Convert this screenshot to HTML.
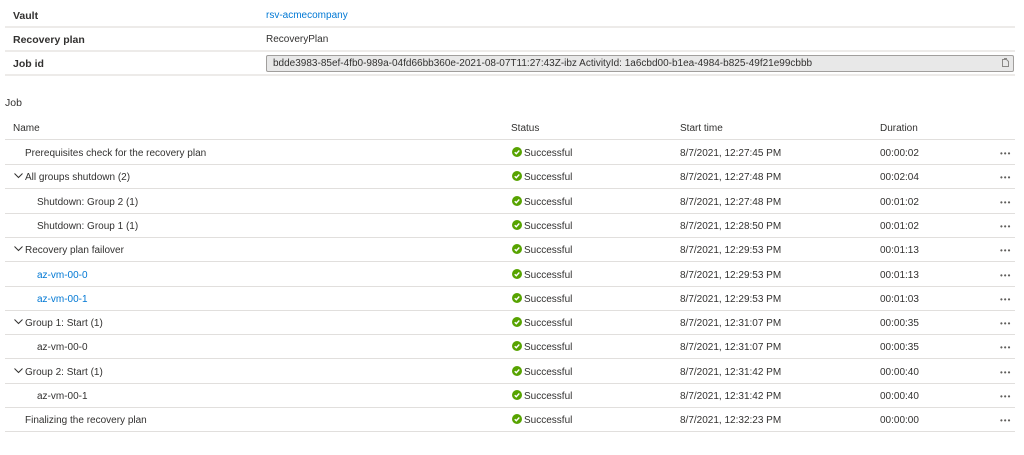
<!DOCTYPE html>
<html><head><meta charset="utf-8"><style>
body{margin:0;width:1024px;height:455px;background:#fff;font-family:"Liberation Sans",sans-serif;font-size:10px;color:#323130;position:relative;overflow:hidden}
.a{position:absolute;white-space:nowrap}
.ln{position:absolute;left:5px;right:9px;height:1px;background:#e1dfdd}
.b{font-weight:bold;font-size:10.5px}
.l{color:#0078d4}
.r{position:absolute;left:5px;right:9px;height:24px;border-bottom:1px solid #e1dfdd}
.r span{position:absolute;top:8px;white-space:nowrap}
.ck{position:absolute;left:507px;top:7px;width:10px;height:10px}
.dots{position:absolute;left:995px;top:9px!important;font-size:8px;letter-spacing:1px;color:#605e5c}
.chev{position:absolute;left:9px;top:9px}
</style></head><body>
<div class="a b" style="left:13px;top:10px">Vault</div>
<div class="a l" style="left:266px;top:10px">rsv-acmecompany</div>
<div class="ln" style="top:26px;height:2px;background:#edebe9"></div>
<div class="a b" style="left:13px;top:34px">Recovery plan</div>
<div class="a" style="left:266px;top:34px">RecoveryPlan</div>
<div class="ln" style="top:50px;height:2px;background:#edebe9"></div>
<div class="a b" style="left:13px;top:58px">Job id</div>
<div class="a" style="left:266px;top:55px;width:746px;height:15px;background:#e8e8e8;border:1px solid #a19f9d;border-radius:2px"></div>
<div class="a" style="left:273px;top:58px;color:#323130">bdde3983-85ef-4fb0-989a-04fd66bb360e-2021-08-07T11:27:43Z-ibz ActivityId: 1a6cbd00-b1ea-4984-b825-49f21e99cbbb</div>
<svg class="a" style="left:1001px;top:58px" width="9" height="10" viewBox="0 0 9 10"><path d="M1.5 1.5h4l2 2v5h-6z" fill="none" stroke="#8a8886"/><path d="M3 .5h3" stroke="#8a8886"/></svg>
<div class="ln" style="top:74px;height:2px;background:#edebe9"></div>
<div class="a" style="left:5px;top:97px;font-size:10.5px">Job</div>
<div class="r" style="top:115px"><span style="left:8px">Name</span><span style="left:506px">Status</span><span style="left:675px">Start time</span><span style="left:875px">Duration</span></div>

<div class="r" style="top:140px"><span style="left:20px">Prerequisites check for the recovery plan</span><svg class="ck" viewBox="0 0 10 10"><circle cx="5" cy="5" r="5" fill="#57a300"/><path d="M2.7 5.2l1.6 1.5 3-3.2" fill="none" stroke="#fff" stroke-width="1.4"/></svg><span style="left:519px">Successful</span><span style="left:675px">8/7/2021, 12:27:45 PM</span><span style="left:875px">00:00:02</span><span class="dots">•••</span></div>
<div class="r" style="top:164.3px"><svg class="chev" width="9" height="6"><path d="M.5 .5l4 4 4-4" fill="none" stroke="#323130"/></svg><span style="left:20px">All groups shutdown (2)</span><svg class="ck" viewBox="0 0 10 10"><circle cx="5" cy="5" r="5" fill="#57a300"/><path d="M2.7 5.2l1.6 1.5 3-3.2" fill="none" stroke="#fff" stroke-width="1.4"/></svg><span style="left:519px">Successful</span><span style="left:675px">8/7/2021, 12:27:48 PM</span><span style="left:875px">00:02:04</span><span class="dots">•••</span></div>
<div class="r" style="top:188.6px"><span style="left:32px">Shutdown: Group 2 (1)</span><svg class="ck" viewBox="0 0 10 10"><circle cx="5" cy="5" r="5" fill="#57a300"/><path d="M2.7 5.2l1.6 1.5 3-3.2" fill="none" stroke="#fff" stroke-width="1.4"/></svg><span style="left:519px">Successful</span><span style="left:675px">8/7/2021, 12:27:48 PM</span><span style="left:875px">00:01:02</span><span class="dots">•••</span></div>
<div class="r" style="top:212.9px"><span style="left:32px">Shutdown: Group 1 (1)</span><svg class="ck" viewBox="0 0 10 10"><circle cx="5" cy="5" r="5" fill="#57a300"/><path d="M2.7 5.2l1.6 1.5 3-3.2" fill="none" stroke="#fff" stroke-width="1.4"/></svg><span style="left:519px">Successful</span><span style="left:675px">8/7/2021, 12:28:50 PM</span><span style="left:875px">00:01:02</span><span class="dots">•••</span></div>
<div class="r" style="top:237.2px"><svg class="chev" width="9" height="6"><path d="M.5 .5l4 4 4-4" fill="none" stroke="#323130"/></svg><span style="left:20px">Recovery plan failover</span><svg class="ck" viewBox="0 0 10 10"><circle cx="5" cy="5" r="5" fill="#57a300"/><path d="M2.7 5.2l1.6 1.5 3-3.2" fill="none" stroke="#fff" stroke-width="1.4"/></svg><span style="left:519px">Successful</span><span style="left:675px">8/7/2021, 12:29:53 PM</span><span style="left:875px">00:01:13</span><span class="dots">•••</span></div>
<div class="r" style="top:261.5px"><span class="l" style="left:32px">az-vm-00-0</span><svg class="ck" viewBox="0 0 10 10"><circle cx="5" cy="5" r="5" fill="#57a300"/><path d="M2.7 5.2l1.6 1.5 3-3.2" fill="none" stroke="#fff" stroke-width="1.4"/></svg><span style="left:519px">Successful</span><span style="left:675px">8/7/2021, 12:29:53 PM</span><span style="left:875px">00:01:13</span><span class="dots">•••</span></div>
<div class="r" style="top:285.8px"><span class="l" style="left:32px">az-vm-00-1</span><svg class="ck" viewBox="0 0 10 10"><circle cx="5" cy="5" r="5" fill="#57a300"/><path d="M2.7 5.2l1.6 1.5 3-3.2" fill="none" stroke="#fff" stroke-width="1.4"/></svg><span style="left:519px">Successful</span><span style="left:675px">8/7/2021, 12:29:53 PM</span><span style="left:875px">00:01:03</span><span class="dots">•••</span></div>
<div class="r" style="top:310.1px"><svg class="chev" width="9" height="6"><path d="M.5 .5l4 4 4-4" fill="none" stroke="#323130"/></svg><span style="left:20px">Group 1: Start (1)</span><svg class="ck" viewBox="0 0 10 10"><circle cx="5" cy="5" r="5" fill="#57a300"/><path d="M2.7 5.2l1.6 1.5 3-3.2" fill="none" stroke="#fff" stroke-width="1.4"/></svg><span style="left:519px">Successful</span><span style="left:675px">8/7/2021, 12:31:07 PM</span><span style="left:875px">00:00:35</span><span class="dots">•••</span></div>
<div class="r" style="top:334.4px"><span style="left:32px">az-vm-00-0</span><svg class="ck" viewBox="0 0 10 10"><circle cx="5" cy="5" r="5" fill="#57a300"/><path d="M2.7 5.2l1.6 1.5 3-3.2" fill="none" stroke="#fff" stroke-width="1.4"/></svg><span style="left:519px">Successful</span><span style="left:675px">8/7/2021, 12:31:07 PM</span><span style="left:875px">00:00:35</span><span class="dots">•••</span></div>
<div class="r" style="top:358.7px"><svg class="chev" width="9" height="6"><path d="M.5 .5l4 4 4-4" fill="none" stroke="#323130"/></svg><span style="left:20px">Group 2: Start (1)</span><svg class="ck" viewBox="0 0 10 10"><circle cx="5" cy="5" r="5" fill="#57a300"/><path d="M2.7 5.2l1.6 1.5 3-3.2" fill="none" stroke="#fff" stroke-width="1.4"/></svg><span style="left:519px">Successful</span><span style="left:675px">8/7/2021, 12:31:42 PM</span><span style="left:875px">00:00:40</span><span class="dots">•••</span></div>
<div class="r" style="top:383px"><span style="left:32px">az-vm-00-1</span><svg class="ck" viewBox="0 0 10 10"><circle cx="5" cy="5" r="5" fill="#57a300"/><path d="M2.7 5.2l1.6 1.5 3-3.2" fill="none" stroke="#fff" stroke-width="1.4"/></svg><span style="left:519px">Successful</span><span style="left:675px">8/7/2021, 12:31:42 PM</span><span style="left:875px">00:00:40</span><span class="dots">•••</span></div>
<div class="r" style="top:407.3px"><span style="left:20px">Finalizing the recovery plan</span><svg class="ck" viewBox="0 0 10 10"><circle cx="5" cy="5" r="5" fill="#57a300"/><path d="M2.7 5.2l1.6 1.5 3-3.2" fill="none" stroke="#fff" stroke-width="1.4"/></svg><span style="left:519px">Successful</span><span style="left:675px">8/7/2021, 12:32:23 PM</span><span style="left:875px">00:00:00</span><span class="dots">•••</span></div>
</body></html>
